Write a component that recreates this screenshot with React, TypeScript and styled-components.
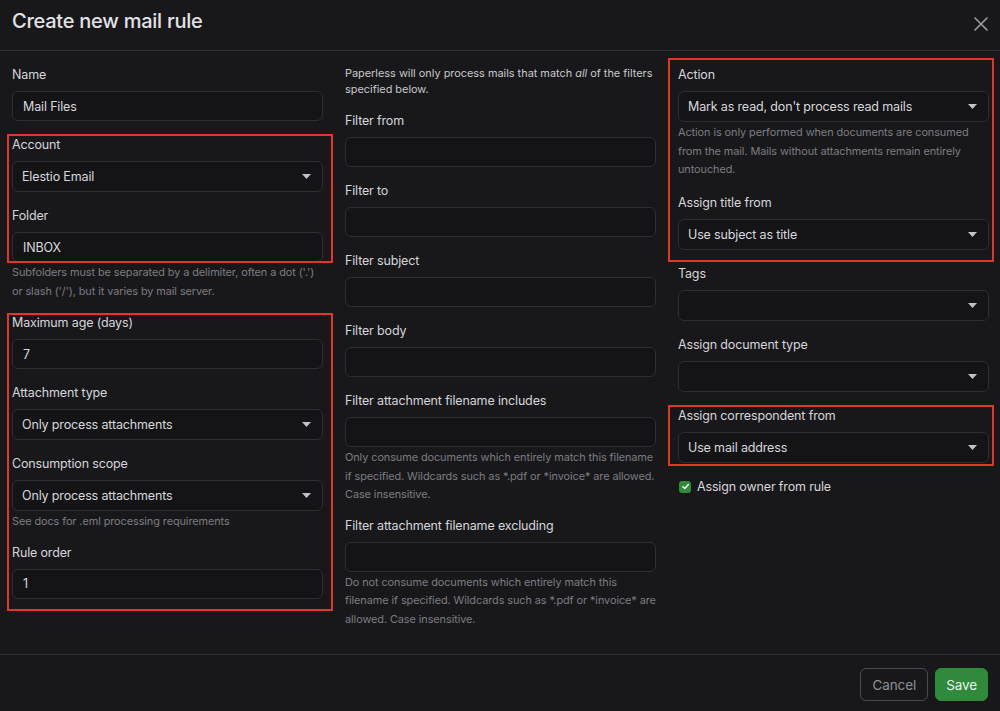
import React from "react";
import styled, { createGlobalStyle } from "styled-components";

const GlobalStyle = createGlobalStyle`
  html, body {
    margin: 0;
    padding: 0;
    background: #18181b;
  }
  * {
    box-sizing: border-box;
  }
`;

const Modal = styled.div`
  width: 1000px;
  height: 711px;
  display: flex;
  flex-direction: column;
  background: #18181b;
  color: #d6d6da;
  font-family: Inter, "Noto Sans", sans-serif;
  overflow: hidden;
`;

const Header = styled.div`
  height: 51px;
  flex: none;
  display: flex;
  align-items: center;
  justify-content: space-between;
  padding: 0 11px 8px 12px;
  border-bottom: 1px solid #2f2f33;
`;

const Title = styled.h1`
  margin: 0;
  font-size: 20px;
  font-weight: 500;
  color: #e2e2e6;
  letter-spacing: -0.25px;
`;

const CloseButton = styled.button`
  background: none;
  border: none;
  padding: 0;
  width: 16px;
  height: 16px;
  display: flex;
  align-items: center;
  justify-content: center;
  cursor: pointer;
  margin-top: 6px;
`;

const Body = styled.div`
  flex: 1;
  display: grid;
  grid-template-columns: repeat(3, 311px);
  column-gap: 22px;
  padding: 16px 12px 0 12px;
  align-content: start;
`;

const Column = styled.div`
  display: flex;
  flex-direction: column;
`;

const Highlight = styled.div<{ $t: number; $b: number; $l: number; $r: number; $mb?: number }>`
  position: relative;
  display: flex;
  flex-direction: column;
  margin-bottom: ${(p) => p.$mb ?? 0}px;
  &::after {
    content: "";
    position: absolute;
    top: ${(p) => -p.$t}px;
    bottom: ${(p) => -p.$b}px;
    left: ${(p) => -p.$l}px;
    right: ${(p) => -p.$r}px;
    border: 2px solid #e0372a;
    pointer-events: none;
  }
`;

const Field = styled.div<{ $gap?: number }>`
  display: flex;
  flex-direction: column;
  margin-bottom: ${(p) => p.$gap ?? 16}px;
`;

const Label = styled.label`
  font-size: 12.5px;
  letter-spacing: -0.15px;
  line-height: 16px;
  color: #d6d6da;
  margin-bottom: 8px;
`;

const TextInput = styled.div`
  height: 30px;
  border: 1px solid #2e2e33;
  border-radius: 6px;
  background: #141416;
  padding: 0 10px;
  display: flex;
  align-items: center;
  font-size: 12.5px;
  letter-spacing: -0.15px;
  color: #d8d8dc;
`;

const SelectBox = styled(TextInput)`
  height: 31px;
  justify-content: space-between;
  padding: 0 11px 0 9px;
`;

const Help = styled.div`
  font-size: 10.9px;
  letter-spacing: -0.08px;
  line-height: 18.5px;
  color: #7c7c82;
  margin-top: 1px;
`;

const Intro = styled.p`
  font-size: 10.9px;
  line-height: 16px;
  color: #c8c8cc;
  margin: -2px 0 16px 0;
`;

const Italic = styled.span`
  font-style: italic;
`;

const CheckRow = styled.div`
  display: flex;
  align-items: center;
  gap: 6px;
  height: 16px;
  margin-top: 16px;
  padding-left: 1px;
  font-size: 12.5px;
  letter-spacing: -0.15px;
  color: #d6d6da;
`;

const CheckBox = styled.span`
  width: 12px;
  height: 12px;
  border-radius: 3px;
  background: #2f8a3b;
  display: flex;
  align-items: center;
  justify-content: center;
`;

const Footer = styled.div`
  flex: none;
  height: 57px;
  border-top: 1px solid #2f2f33;
  display: flex;
  justify-content: flex-end;
  align-items: flex-start;
  gap: 7px;
  padding: 13px 12px 0 12px;
`;

const Button = styled.button<{ $primary?: boolean }>`
  height: 33px;
  padding: 0 ${(p) => (p.$primary ? 10 : 11)}px;
  border-radius: 6px;
  font-family: inherit;
  font-size: 13.5px;
  letter-spacing: -0.1px;
  border: 1px solid ${(p) => (p.$primary ? "#2f8a3b" : "#4a4a50")};
  background: ${(p) => (p.$primary ? "#2f8a3b" : "transparent")};
  color: ${(p) => (p.$primary ? "#e9f3ea" : "#8f8f95")};
  cursor: pointer;
`;

const Caret = () => (
  <svg width="9" height="5" viewBox="0 0 9 5">
    <polygon points="0,0 9,0 4.5,5" fill="#c2c2c6" />
  </svg>
);

type FieldProps = { label: string; value?: string; help?: React.ReactNode; gap?: number };

const Input: React.FC<FieldProps> = ({ label, value, help, gap }) => (
  <Field $gap={gap}>
    <Label>{label}</Label>
    <TextInput>{value}</TextInput>
    {help && <Help>{help}</Help>}
  </Field>
);

const Select: React.FC<FieldProps> = ({ label, value, help, gap }) => (
  <Field $gap={gap}>
    <Label>{label}</Label>
    <SelectBox>
      <span>{value}</span>
      <Caret />
    </SelectBox>
    {help && <Help>{help}</Help>}
  </Field>
);

export default function App() {
  return (
    <>
      <GlobalStyle />
      <Modal>
        <Header>
          <Title>Create new mail rule</Title>
          <CloseButton aria-label="Close">
            <svg width="14" height="14" viewBox="0 0 14 14">
              <path d="M1 1 L13 13 M13 1 L1 13" stroke="#9c9ca1" strokeWidth="1.6" strokeLinecap="round" />
            </svg>
          </CloseButton>
        </Header>
        <Body>
          <Column>
            <Input label="Name" value="Mail Files" />
            <Highlight $t={3} $b={1} $l={5} $r={10}>
              <Select label="Account" value="Elestio Email" />
              <Input label="Folder" value="INBOX" gap={0} />
            </Highlight>
            <Field $gap={15}>
              <Help>
                Subfolders must be separated by a delimiter, often a dot ('.') or slash ('/'), but it varies by mail
                server.
              </Help>
            </Field>
            <Highlight $t={2} $b={12} $l={5} $r={10}>
              <Input label="Maximum age (days)" value="7" />
              <Select label="Attachment type" value="Only process attachments" />
              <Select
                label="Consumption scope"
                value="Only process attachments"
                help="See docs for .eml processing requirements"
                gap={14}
              />
              <Input label="Rule order" value="1" gap={0} />
            </Highlight>
          </Column>

          <Column>
            <Intro>
              Paperless will only process mails that match <Italic>all</Italic> of the filters specified below.
            </Intro>
            <Input label="Filter from" />
            <Input label="Filter to" />
            <Input label="Filter subject" />
            <Input label="Filter body" />
            <Input
              label="Filter attachment filename includes"
              help="Only consume documents which entirely match this filename if specified. Wildcards such as *.pdf or *invoice* are allowed. Case insensitive."
              gap={14}
            />
            <Input
              label="Filter attachment filename excluding"
              help="Do not consume documents which entirely match this filename if specified. Wildcards such as *.pdf or *invoice* are allowed. Case insensitive."
            />
          </Column>

          <Column>
            <Highlight $t={9} $b={12} $l={10} $r={5} $mb={16}>
              <Select
                label="Action"
                value="Mark as read, don't process read mails"
                help="Action is only performed when documents are consumed from the mail. Mails without attachments remain entirely untouched."
              />
              <Select label="Assign title from" value="Use subject as title" gap={0} />
            </Highlight>
            <Select label="Tags" />
            <Select label="Assign document type" />
            <Highlight $t={3} $b={3} $l={10} $r={5}>
              <Select label="Assign correspondent from" value="Use mail address" gap={0} />
            </Highlight>
            <CheckRow>
              <CheckBox>
                <svg width="9" height="9" viewBox="0 0 10 10">
                  <path
                    d="M2 5.2 L4.2 7.3 L8.2 2.8"
                    stroke="#fff"
                    strokeWidth="1.6"
                    fill="none"
                    strokeLinecap="round"
                    strokeLinejoin="round"
                  />
                </svg>
              </CheckBox>
              Assign owner from rule
            </CheckRow>
          </Column>
        </Body>
        <Footer>
          <Button>Cancel</Button>
          <Button $primary>Save</Button>
        </Footer>
      </Modal>
    </>
  );
}
